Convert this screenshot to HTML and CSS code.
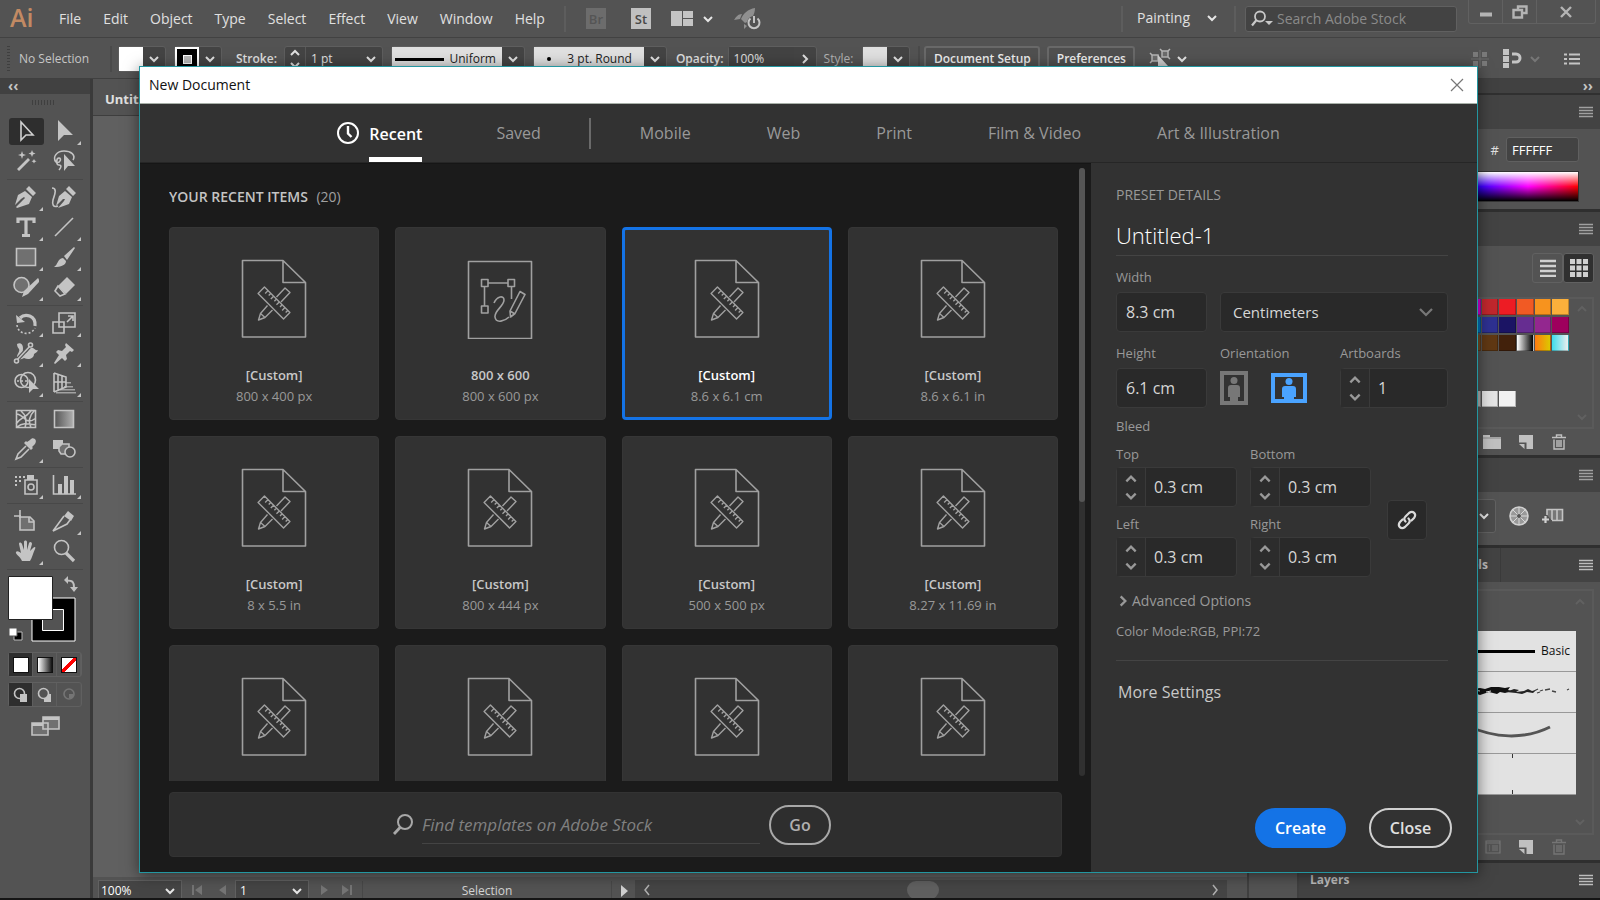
FILE: index.html
```html
<!DOCTYPE html>
<html lang="en">
<head>
<meta charset="utf-8">
<title>New Document</title>
<link rel="stylesheet" href="styles.css">
</head>
<body>
<svg class="defs" aria-hidden="true">
  <symbol id="chev-down" viewBox="0 0 12 12"><path d="M2 4l4 4 4-4" fill="none" stroke="currentColor" stroke-width="2"/></symbol>
  <symbol id="chev-up" viewBox="0 0 12 12"><path d="M2 8l4-4 4 4" fill="none" stroke="currentColor" stroke-width="2"/></symbol>
  <symbol id="chev-right" viewBox="0 0 12 12"><path d="M4 2l4 4-4 4" fill="none" stroke="currentColor" stroke-width="2"/></symbol>
  <symbol id="chev-left" viewBox="0 0 12 12"><path d="M8 1L4 6l4 5" fill="none" stroke="currentColor" stroke-width="1.5"/></symbol>
  <symbol id="chev-thin" viewBox="0 0 12 12"><path d="M4 1l4 5-4 5" fill="none" stroke="currentColor" stroke-width="1.5"/></symbol>
  <symbol id="burger" viewBox="0 0 14 12"><path d="M0 1.5h14M0 4.5h14M0 7.5h14M0 10.5h14" stroke="currentColor" stroke-width="1.6"/></symbol>
  <symbol id="custom-doc" viewBox="0 0 66 80">
    <g fill="none" stroke="currentColor" stroke-width="1.6" stroke-linejoin="round">
      <path d="M1.500 1.500h40.500l22.500 22v54.500h-63zM42 1.500v22h22.500"/>
      <g transform="rotate(45 33 44)">
        <path d="M15 39.500h36v9H15zM20 39.500v4M24 39.500v3M28 39.500v4M32 39.500v3M36 39.500v4M40 39.500v3M44 39.500v4M48 39.500v3" stroke-width="1.400"/>
      </g>
      <path d="M35.500 38l8.500-9 5 4.500-9 9.500M26.500 46.500l-7 8-2 6.500 6.500-2.500 7.500-7.500M19.500 54.500l4.500 4" stroke-width="1.400"/>
    </g>
  </symbol>
  <symbol id="art-doc" viewBox="0 0 66 80">
    <g fill="none" stroke="currentColor" stroke-width="1.600" stroke-linejoin="round">
      <path d="M1.500 2.500h63v77h-63z"/>
      <path d="M14.500 20.500h6.500v7h-6.500zM41 20.500h6.500v7H41zM14.500 47h6.500v7h-6.500zM21 24h20M17.500 27.500V47M44.500 27.500V40"/>
      <path d="M27 44c3-7 10-8 10-3 0 6-10 11-9 17 1 7 10 4 14 0M53 32.500l5 3-10 19-4.500 3.500-.500-6zM43 52l5 3"/>
    </g>
  </symbol>
  <symbol id="new-item" viewBox="0 0 16 16"><path d="M1 1h14v14H8.500V8.500H1zM1 10h5.500v5z" fill="currentColor"/></symbol>
  <symbol id="trash" viewBox="0 0 16 16"><path d="M1 3.500h14M5.500 3V1h5v2M3 5.500v9.500h10V5.500M6 6v7M8 6v7M10 6v7" fill="none" stroke="currentColor" stroke-width="1.400"/></symbol>
</svg>

<div class="app">
  <header class="menubar">
    <span class="logo">Ai</span>
    <nav class="menus">
      <button>File</button><button>Edit</button><button>Object</button><button>Type</button><button>Select</button><button>Effect</button><button>View</button><button>Window</button><button>Help</button>
    </nav>
    <span class="rule"></span>
    <button class="app-chip dim">Br</button>
    <button class="app-chip">St</button>
    <button class="arrange" aria-label="Arrange documents">
      <svg width="22" height="15" viewBox="0 0 22 15"><path d="M0 0h11v15H0zM12 0h10v7H12zM12 8h10v7H12z" fill="#c4c4c4"/></svg>
      <svg class="chev" width="12" height="12"><use href="#chev-down"/></svg>
    </button>
    <button class="gpu" aria-label="GPU preview">
      <svg width="28" height="24" viewBox="0 0 28 24"><path d="M21 1c-7 1-12 6-14 11l4 4c6-2 10-8 10-15zM8 7c-4 0-6 3-8 6l6-1zM10 17l0 5 3-3z" fill="#8f8f8f"/><circle cx="20" cy="16" r="7" fill="#535353"/><path d="M16.500 11.500a5.500 5.500 0 1 0 7 0M20 9v7" fill="none" stroke="#c4c4c4" stroke-width="2"/></svg>
    </button>
    <span class="grow"></span>
    <span class="rule"></span>
    <button class="workspace">Painting <svg class="chev" width="12" height="12"><use href="#chev-down"/></svg></button>
    <span class="rule"></span>
    <label class="stock">
      <svg width="22" height="18" viewBox="0 0 22 18"><circle cx="9" cy="6.500" r="5" fill="none" stroke="#c8c8c8" stroke-width="1.800"/><path d="M5.500 10L1 15.500" stroke="#c8c8c8" stroke-width="2.200"/><path d="M14 11h8l-4 4z" fill="#c8c8c8"/></svg>
      <input type="text" placeholder="Search Adobe Stock" aria-label="Search Adobe Stock">
    </label>
    <div class="winbtns">
      <button aria-label="Minimize"><svg width="14" height="14"><path d="M1 9.500h12" stroke="#b4b4b4" stroke-width="4"/></svg></button>
      <button aria-label="Restore"><svg width="16" height="14" viewBox="0 0 16 14"><path d="M6 5V1.500h8.500V8H10M1.500 5H10v7.500H1.500z" fill="none" stroke="#b4b4b4" stroke-width="2.400"/></svg></button>
      <button class="wide" aria-label="Exit"><svg width="14" height="14"><path d="M2 2l10 10M12 2L2 12" stroke="#b4b4b4" stroke-width="2.400"/></svg></button>
    </div>
  </header>

  <div class="control">
    <span class="grip-v"></span>
    <span class="nosel">No Selection</span>
    <span class="rule"></span>
    <div class="combo fill"><span class="sw white"></span><button aria-label="Fill"><svg width="12" height="12"><use href="#chev-down"/></svg></button></div>
    <div class="combo strokec"><span class="sw ring"></span><button aria-label="Stroke color"><svg width="12" height="12"><use href="#chev-down"/></svg></button></div>
    <label class="lbl" for="stroke">Stroke:</label>
    <div class="combo pt">
      <span class="mini-step"><button aria-label="More"><svg width="12" height="12"><use href="#chev-up"/></svg></button><button aria-label="Less"><svg width="12" height="12"><use href="#chev-down"/></svg></button></span>
      <input id="stroke" type="text" value="1 pt"><button aria-label="Stroke weights"><svg width="12" height="12"><use href="#chev-down"/></svg></button>
    </div>
    <div class="combo"><span class="sample uniform"><i></i>Uniform</span><button aria-label="Profile"><svg width="12" height="12"><use href="#chev-down"/></svg></button></div>
    <div class="combo"><span class="sample round"><b></b>3 pt. Round</span><button aria-label="Brush"><svg width="12" height="12"><use href="#chev-down"/></svg></button></div>
    <label class="lbl dotted" for="opacity">Opacity:</label>
    <div class="combo op"><input id="opacity" type="text" value="100%"><button aria-label="Opacity slider"><svg width="12" height="12"><use href="#chev-right"/></svg></button></div>
    <span class="lbl soft">Style:</span>
    <div class="combo"><span class="sw light"></span><button aria-label="Style"><svg width="12" height="12"><use href="#chev-down"/></svg></button></div>
    <span class="rule"></span>
    <button class="cbtn setup">Document Setup</button>
    <button class="cbtn prefs">Preferences</button>
    <button class="icon similar" aria-label="Select similar"><svg width="24" height="22" viewBox="0 0 24 22"><path d="M4 7h6v6H4zM14 3h6v6h-6z" fill="#6c6c6c" stroke="#b4b4b4" stroke-width="1.500"/><path d="M2 5l2 2M2 15l2-2M12 1l2 2M22 1l-2 2M22 11l-2-2" stroke="#b4b4b4" stroke-width="1.500"/><path d="M10 7l10 11h-6l-4 4z" fill="#d0d0d0"/></svg></button>
    <svg class="chev" width="12" height="12"><use href="#chev-down"/></svg>
    <span class="grow"></span>
    <button class="icon" aria-label="Align pixels"><svg width="18" height="18"><path d="M2 2h5v5H2zM11 2h5v5h-5zM2 11h5v5H2zM11 11h5v5h-5z" fill="#7a7a7a"/><path d="M0 9h18M9 0v18" stroke="#6c6c6c"/></svg></button>
    <button class="icon snap" aria-label="Snap"><svg width="19" height="20"><path d="M0 0h6v6H0zM0 7h6v6H0zM0 14h6v5H0z" fill="#c4c4c4"/><path d="M9 5h4a4 4 0 0 1 0 8H9" fill="none" stroke="#c4c4c4" stroke-width="3"/></svg></button>
    <svg class="chev dimc" width="12" height="12"><use href="#chev-down"/></svg>
    <button class="icon opts" aria-label="Options"><svg width="16" height="12"><path d="M0 1.500h3M0 6h3M0 10.500h3M5 1.500h11M5 6h11M5 10.500h11" stroke="#c4c4c4" stroke-width="2"/></svg></button>
  </div>

  <div class="work">
    <aside class="toolbox">
      <div class="tb-head">‹‹</div>
      <div class="grip-h"></div>
      <div class="tools">
        <button class="on" aria-label="Selection"><svg width="26" height="26" viewBox="0 0 26 26"><path d="M8 4v18l5-5h7z" fill="none" stroke="#d0d0d0" stroke-width="1.600"/></svg></button>
        <button class="more" aria-label="Direct selection"><svg width="26" height="26" viewBox="0 0 26 26"><path d="M7 2v21l6-6h9z"/></svg></button>
        <button aria-label="Magic wand"><svg width="26" height="26" viewBox="0 0 26 26"><path d="M4 21L15 10l2 2L6 23zM9 3l1 3 3 1-3 1-1 3-1-3-3-1 3-1zM19 2l1 2.500 2.500 1-2.500 1-1 2.500-1-2.500-2.500-1 2.500-1zM21 11l.8 1.500 1.700.8-1.700.8-.8 1.500-.8-1.500-1.700-.8 1.700-.8z"/></svg></button>
        <button aria-label="Lasso"><svg width="26" height="26" viewBox="0 0 26 26"><g class="ln"><path d="M5 14C1 9 6 3 13 3s12 4 9 9M5 14c4 2 6-4 3-4s-3 7 0 7 2 3 0 5"/></g><path d="M13 6v17l4-5h7z"/></svg></button>
      </div>
      <div class="tools">
        <button class="more" aria-label="Pen"><svg width="26" height="26" viewBox="0 0 26 26"><path d="M16 2l7 7-3 3-7-7zM12 7l7 6-3 7-12 4-1-1 7-7 2-2-1-1-3 2-6 6 3-10z"/></svg></button>
        <button aria-label="Curvature"><svg width="26" height="26" viewBox="0 0 26 26"><path d="M18 2l7 7-3 3-7-7zM14 7l7 6-3 7-11 4 6-7 1-2-2 0-7 7 3-10z"/><path class="ln" d="M1 4c6 0 2 8 1 12s0 8 5 6"/></svg></button>
        <button class="more" aria-label="Type"><svg width="26" height="26" viewBox="0 0 26 26"><path class="th" d="M5 9V5h16v4M13 5v17M9 21.500h8"/></svg></button>
        <button class="more" aria-label="Line"><svg width="26" height="26" viewBox="0 0 26 26"><path class="ln" d="M4 22L22 4"/></svg></button>
        <button class="more" aria-label="Rectangle"><svg width="26" height="26" viewBox="0 0 26 26"><path class="ln fd" d="M3.500 4.500h19v17h-19z"/></svg></button>
        <button class="more" aria-label="Brush"><svg width="26" height="26" viewBox="0 0 26 26"><path d="M23 3L13 12l3 4 8-12zM12 14l3 3c0 4-5 6-12 6 4-2 3-8 9-9z"/></svg></button>
        <button class="more" aria-label="Shaper"><svg width="26" height="26" viewBox="0 0 26 26"><circle class="ln fd" cx="8.500" cy="11" r="7.500"/><path d="M25 4l2 3L15 20l-6 3 2-6z"/></svg></button>
        <button class="more" aria-label="Eraser"><svg width="26" height="26" viewBox="0 0 26 26"><path d="M16 3l8 8-9 9-8-8z"/><path class="ln" d="M7 12l-3 5 5 5 5-2z"/></svg></button>
      </div>
      <div class="tools">
        <button class="more" aria-label="Rotate"><svg width="26" height="26" viewBox="0 0 26 26"><path class="th" d="M7 8c5-5 16-3 15 8"/><path d="M3 5l1 8 8-1z"/><path class="ln dot" d="M4 15c1 10 14 11 18 3"/></svg></button>
        <button class="more" aria-label="Scale"><svg width="26" height="26" viewBox="0 0 26 26"><path class="ln" d="M8 3h16v14H8zM2 12h11v11H2zM16 12l6-6M17 6h5v5"/></svg></button>
        <button class="more" aria-label="Width"><svg width="26" height="26" viewBox="0 0 26 26"><path d="M4 4c3-2 6 0 6 4 0 3-1 5 2 5s4-7 8-5c2 1 3 3 5 2-1 3-3 3-4 4 0 5-6 6-10 4-3 2-8 2-7-2 1-3 3-5 2-7-1-1-2-3-2-5z"/><path d="M3 21L18 5" stroke="#535353" stroke-width="4"/><path class="ln" d="M3 21L18 5"/><circle class="ln bg" cx="3.500" cy="21" r="2"/><circle class="ln bg" cx="17.500" cy="5" r="2"/></svg></button>
        <button class="more" aria-label="Puppet warp"><svg width="26" height="26" viewBox="0 0 26 26"><path d="M15 3l8 7-2 2-2-1-4 4 1 4-2 2-9-9 2-2 4 1 4-4-1-2zM8 15l3 3-7 6-1-1z"/></svg></button>
        <button class="more" aria-label="Shape builder"><svg width="26" height="26" viewBox="0 0 26 26"><circle class="ln" cx="8.500" cy="11" r="6.500"/><circle class="ln" cx="15" cy="10" r="7.500"/><path class="ln dot" d="M4 11h12"/><path d="M16 9v14l4-4h6z"/></svg></button>
        <button class="more" aria-label="Perspective grid"><svg width="26" height="26" viewBox="0 0 26 26"><path class="ln" d="M3 3v19M3 3l12 4v10L3 22M7 4v16M11 5v13M3 12h12"/><path d="M14 12h6v1.500h-6zM13 16h9v1.500h-9zM9 19h15v1.500H9zM5 22h20v1.500H5z" opacity=".7"/></svg></button>
      </div>
      <div class="tools">
        <button aria-label="Mesh"><svg width="26" height="26" viewBox="0 0 26 26"><path class="ln" d="M3.500 4.500h19v17h-19zM3 8c4 0 6 2 9 5s6 3 11-1M3 18c3-5 7-6 11-9l5-5M4 21c6-5 12-3 19-2M8 5c5 4 6 10 4 17M21 5c-5 5-6 10-3 17"/></svg></button>
        <button aria-label="Gradient"><svg width="26" height="26" viewBox="0 0 26 26"><defs><linearGradient id="g1"><stop stop-color="#555"/><stop offset="1" stop-color="#b0b0b0"/></linearGradient></defs><path d="M3.500 4.500h19v17h-19z" fill="url(#g1)" stroke="#c4c4c4" stroke-width="1.600"/></svg></button>
        <button class="more" aria-label="Eyedropper"><svg width="26" height="26" viewBox="0 0 26 26"><path d="M17 4c3-4 8 0 5 4l-3 3 1 1-2 2-7-7 2-2 1 1z"/><path class="ln" d="M13 10L5 18l-2 5 5-2 8-8"/></svg></button>
        <button aria-label="Blend"><svg width="26" height="26" viewBox="0 0 26 26"><path d="M2 4h10v9H2z"/><path class="ln fd" d="M11 8h7v7l-3 3h-5l-2-3v-4z"/><circle class="ln bg" cx="19" cy="16" r="5"/></svg></button>
      </div>
      <div class="tools">
        <button class="more" aria-label="Symbol sprayer"><svg width="26" height="26" viewBox="0 0 26 26"><path class="ln" d="M12 8h12v14H12z"/><circle class="ln" cx="18" cy="15" r="3"/><path d="M14 3h7v5h-7zM2 4h2v2H2zM6 4h2v2H6zM10 4h2v2h-2zM2 8h2v2H2zM6 8h2v2H6zM2 12h2v2H2z"/></svg></button>
        <button class="more" aria-label="Graph"><svg width="26" height="26" viewBox="0 0 26 26"><path class="ln" d="M2.500 3v19H25"/><path d="M7 12h4v10H7zM13 4h4v18h-4zM19 8h4v14h-4z"/></svg></button>
      </div>
      <div class="tools">
        <button aria-label="Artboard"><svg width="26" height="26" viewBox="0 0 26 26"><path class="ln fd" d="M7 9h10l4 4v9H7z"/><path class="ln" d="M7 2v8M1 8h7M16 9v5h5"/></svg></button>
        <button class="more" aria-label="Slice"><svg width="26" height="26" viewBox="0 0 26 26"><path d="M17 3l6 5-3 5-7-5z"/><path class="ln" d="M13 8L2 23l14-7 3-4"/></svg></button>
        <button class="more" aria-label="Hand"><svg width="26" height="26" viewBox="0 0 26 26"><path d="M9 23c-2-5-7-7-6-9s4 0 5 1L6 6c0-2 2-2 3 0l2 6V4c0-2 3-2 3 0v8l2-7c1-2 3-1 3 1l-2 7 3-3c2-2 3-1 2 1-2 4-3 9-5 12z"/></svg></button>
        <button aria-label="Zoom"><svg width="26" height="26" viewBox="0 0 26 26"><circle class="ln" cx="10.500" cy="9.500" r="7"/><path class="th" d="M15 15l8 8"/></svg></button>
      </div>
      <svg class="fillstroke" width="84" height="72" viewBox="0 0 84 72">
        <path d="M24 22h43v43H24z" fill="#000" stroke="#fff"/><path d="M34.500 33.500h21v21h-21z" fill="#535353" stroke="#fff"/>
        <path d="M.500 .500h44v43H.500z" fill="#fff" stroke="#222"/>
        <path d="M59 4.500c6 0 7 2 7 7" fill="none" stroke="#c0c0c0" stroke-width="2"/><path d="M60 0v8l-4-4zM62 11h8l-4 5z" fill="#c0c0c0"/>
        <path d="M6 56h8v8H6z" fill="#000" stroke="#bbb"/><path d="M1 52h8v8H1z" fill="#fff" stroke="#555"/>
      </svg>
      <div class="modes">
        <button class="sel" aria-label="Color"><span class="m white"></span></button>
        <button aria-label="Gradient fill"><span class="m grad"></span></button>
        <button aria-label="None"><span class="m none"></span></button>
      </div>
      <div class="modes">
        <button class="sel" aria-label="Draw normal"><svg width="16" height="16"><circle cx="6.500" cy="6.500" r="5" class="ln"/><path d="M7 7h7v8H7z" fill="#c4c4c4"/></svg></button>
        <button aria-label="Draw behind"><svg width="16" height="16"><path d="M7 7h7v8H7z" fill="#c4c4c4"/><circle cx="6.500" cy="6.500" r="5" class="ln bg"/></svg></button>
        <button class="faint" aria-label="Draw inside"><svg width="16" height="16"><circle cx="8" cy="7" r="5" class="ln"/><path d="M8 7h4v4H8z" fill="#c4c4c4"/></svg></button>
      </div>
      <button class="screen" aria-label="Screen mode"><svg width="30" height="22"><path class="ln fd" d="M1 8h16v12H1zM12 2h16v12H12z"/><path d="M1 9.500h11M12 3.500h16" stroke="#c4c4c4" stroke-width="3"/></svg></button>
    </aside>

    <main class="canvas">
      <div class="doctabs"><span>Untitled</span></div>
      <div class="board"></div>
      <div class="status">
        <div class="zoomsel"><input type="text" value="100%" aria-label="Zoom level"><svg class="chev" width="12" height="12"><use href="#chev-down"/></svg></div>
        <div class="nav"><svg width="36" height="12"><path d="M1 1h2v10H1zM11 1v10L4 6zM35 1v10l-7-5z"/></svg></div>
        <div class="zoomsel page"><input type="text" value="1" aria-label="Artboard number"><svg class="chev" width="12" height="12"><use href="#chev-down"/></svg></div>
        <div class="nav"><svg width="36" height="12"><path d="M3 1v10l7-5zM24 1v10l7-5zM32 1h2v10h-2z"/></svg></div>
        <div class="toolname">Selection</div>
        <svg class="play" width="8" height="12"><path d="M0 0v12l7-6z" fill="#d0d0d0"/></svg>
        <div class="hscroll"><svg width="12" height="12"><use href="#chev-left"/></svg><span class="thumb"></span><svg width="12" height="12"><use href="#chev-thin"/></svg></div>
      </div>
    </main>
    <div class="strip"></div>

    <aside class="dock">
      <div class="dock-head">››</div>
      <section class="panel">
        <div class="ptab"><svg width="14" height="12"><use href="#burger"/></svg></div>
        <div class="pbody color">
          <label class="hex"># <input type="text" value="FFFFFF"></label>
          <div class="spectrum"></div>
        </div>
      </section>
      <section class="panel">
        <div class="ptab"><svg width="14" height="12"><use href="#burger"/></svg></div>
        <div class="pbody swatches">
          <div class="views">
            <button aria-label="List view"><svg width="16" height="18"><path d="M0 2h16M0 7h16M0 12h16M0 17h16" stroke="#d0d0d0" stroke-width="2.400"/></svg></button>
            <button class="sel" aria-label="Grid view"><svg width="18" height="18"><path d="M0 0h5v5H0zM6.500 0h5v5h-5zM13 0h5v5h-5zM0 6.500h5v5H0zM6.500 6.500h5v5h-5zM13 6.500h5v5h-5zM0 13h5v5H0zM6.500 13h5v5h-5zM13 13h5v5h-5z" fill="#d0d0d0"/></svg></button>
          </div>
          <div class="well">
            <div class="chips">
              <i class="c1"></i><i class="c2"></i><i class="c3"></i><i class="c4"></i><i class="c5"></i><i class="c6"></i>
              <i class="c7"></i><i class="c8"></i><i class="c9"></i><i class="c10"></i><i class="c11"></i><i class="c12"></i>
              <i class="c13"></i><i class="c14"></i><i class="c15"></i><i class="c16"></i><i class="c17"></i><i class="c18"></i>
            </div>
            <div class="chips grays"><i class="k1"></i><i class="k2"></i><i class="k3"></i></div>
            <div class="vbar"><svg width="12" height="12"><use href="#chev-up"/></svg><svg width="12" height="12"><use href="#chev-down"/></svg></div>
          </div>
          <div class="acts">
            <svg width="18" height="14"><path d="M0 0h7v2h11v12H0z" fill="currentColor"/><path d="M0 3h18" stroke="#888"/></svg>
            <svg width="16" height="16"><use href="#new-item"/></svg>
            <svg width="16" height="16"><use href="#trash"/></svg>
          </div>
        </div>
      </section>
      <section class="panel">
        <div class="ptab"><svg width="14" height="12"><use href="#burger"/></svg></div>
        <div class="pbody guide">
          <div class="gbox"><svg class="chev" width="12" height="12"><use href="#chev-down"/></svg></div>
          <svg width="22" height="22" viewBox="0 0 22 22"><circle cx="11" cy="11" r="9" fill="#999" stroke="#d0d0d0" stroke-width="1.600"/><path d="M11 2v18M2 11h18M4.500 4.500l13 13M17.500 4.500l-13 13" stroke="#d8d8d8"/><circle cx="11" cy="11" r="2" fill="#555"/></svg>
          <svg class="add" width="22" height="16" viewBox="0 0 22 16"><path d="M5 7V1.500h15.500v11H10M10 2v10M15 2v10" fill="#777" stroke="#c4c4c4" stroke-width="1.600"/><path d="M3.500 8v7M0 11.500h7" stroke="#d0d0d0" stroke-width="2.200"/></svg>
        </div>
      </section>
      <section class="panel">
        <div class="ptab named"><span class="symtab">Symbols</span><svg width="14" height="12"><use href="#burger"/></svg></div>
        <div class="pbody brushes">
          <div class="well tall">
            <div class="brushlist">
              <div class="brow"><i></i><span>Basic</span></div>
              <div class="brow"><svg width="160" height="20" viewBox="0 0 160 20"><path d="M30 9l10-2 10 1 14-2 5 1 6-2 8 0 6 1 5-1-2 3 4 1-7 2-5-1-3 2-8-2-9 3-6-2-5 3-5-1-8 2-9-3-10 3z" fill="#111"/><path d="M58 8l6 1M70 10l5-1M50 10l4-1" stroke="#e2e2e2"/><path d="M90 10l8-3 5 1-3 2 8-1 4-2 4 2 4-1-3 3-6-1-5 2-6-1z" fill="#222"/><path d="M118 9l4-2M124 9l3-1M129 8l5-1M121 11l3-1M136 9l4 1M151 8l2-1" stroke="#444" stroke-width="1.300"/></svg></div>
              <div class="brow"><svg width="160" height="20" viewBox="0 0 160 20"><path d="M52 3C78 15 108 17 134 4" fill="none" stroke="#555" stroke-width="3"/></svg></div>
              <div class="brow ticks"><b></b><b></b></div>
            </div>
            <div class="vbar"><svg width="12" height="12"><use href="#chev-up"/></svg><svg width="12" height="12"><use href="#chev-down"/></svg></div>
          </div>
          <div class="acts">
            <svg class="off" width="16" height="16"><path d="M1 2h14v12H1zM1 4h14M4 7h1M7 7h6M4 9h1M7 9h6M4 11h1M7 11h6" fill="none" stroke="currentColor" stroke-width="1.200"/></svg>
            <svg width="16" height="16"><use href="#new-item"/></svg>
            <svg class="off" width="16" height="16"><use href="#trash"/></svg>
          </div>
        </div>
      </section>
      <section class="panel last">
        <div class="ptab named"><span>Layers</span><svg width="14" height="12"><use href="#burger"/></svg></div>
      </section>
    </aside>
  </div>
</div>

<div class="dialog" role="dialog" aria-labelledby="dlg-title">
  <div class="titlebar"><h1 id="dlg-title">New Document</h1><button aria-label="Close dialog"><svg width="14" height="14"><path d="M1 1l12 12M13 1L1 13" stroke="#777" stroke-width="1.200"/></svg></button></div>
  <nav class="tabs">
    <button class="active"><svg width="24" height="24"><circle cx="12" cy="12" r="10" fill="none" stroke="#fff" stroke-width="2"/><path d="M12 5v7.500l3.500 3.500" fill="none" stroke="#fff" stroke-width="2.400"/></svg><span>Recent</span></button>
    <button>Saved</button>
    <i class="split"></i>
    <button>Mobile</button><button>Web</button><button>Print</button><button>Film &amp; Video</button><button>Art &amp; Illustration</button>
  </nav>
  <div class="dlg-main">
    <section class="recent">
      <div class="listwrap">
        <div class="list">
          <h2>YOUR RECENT ITEMS <span>(20)</span></h2>
          <div class="cards">
            <button class="card"><svg><use href="#custom-doc"/></svg><strong>[Custom]</strong><span>800 x 400 px</span></button>
            <button class="card"><svg><use href="#art-doc"/></svg><strong>800 x 600</strong><span>800 x 600 px</span></button>
            <button class="card picked"><svg><use href="#custom-doc"/></svg><strong>[Custom]</strong><span>8.6 x 6.1 cm</span></button>
            <button class="card"><svg><use href="#custom-doc"/></svg><strong>[Custom]</strong><span>8.6 x 6.1 in</span></button>
            <button class="card"><svg><use href="#custom-doc"/></svg><strong>[Custom]</strong><span>8 x 5.5 in</span></button>
            <button class="card"><svg><use href="#custom-doc"/></svg><strong>[Custom]</strong><span>800 x 444 px</span></button>
            <button class="card"><svg><use href="#custom-doc"/></svg><strong>[Custom]</strong><span>500 x 500 px</span></button>
            <button class="card"><svg><use href="#custom-doc"/></svg><strong>[Custom]</strong><span>8.27 x 11.69 in</span></button>
            <button class="card"><svg><use href="#custom-doc"/></svg></button>
            <button class="card"><svg><use href="#custom-doc"/></svg></button>
            <button class="card"><svg><use href="#custom-doc"/></svg></button>
            <button class="card"><svg><use href="#custom-doc"/></svg></button>
          </div>
        </div>
        <div class="sbar"><span></span></div>
      </div>
      <form class="find">
        <svg width="22" height="24" viewBox="0 0 22 24"><circle cx="13" cy="9" r="7" fill="none" stroke="#a8a8a8" stroke-width="2"/><path d="M8.500 14L2 21" stroke="#a8a8a8" stroke-width="2.800"/></svg>
        <input type="text" placeholder="Find templates on Adobe Stock" aria-label="Find templates">
        <button type="button" class="pill go">Go</button>
      </form>
    </section>

    <section class="details">
      <h2>PRESET DETAILS</h2>
      <input class="docname" type="text" value="Untitled-1" aria-label="Name">
      <div class="row">
        <label class="field w">Width<input type="text" value="8.3 cm"></label>
        <div class="unit"><select aria-label="Units"><option>Centimeters</option></select><svg width="18" height="18" viewBox="0 0 12 12"><path d="M2 4l4 4 4-4" fill="none" stroke="#777" stroke-width="1.500"/></svg></div>
      </div>
      <div class="row">
        <label class="field w">Height<input type="text" value="6.1 cm"></label>
        <div class="orient"><span>Orientation</span>
          <div>
            <button aria-label="Portrait"><svg width="28" height="34"><path d="M2 2h24v30H2z" fill="none" stroke="#777" stroke-width="4"/><circle cx="14" cy="9.500" r="3.500" fill="#777"/><path d="M8 26V17q0-3 3-3h6q3 0 3 3v9h-2v6h-8v-6z" fill="#777"/></svg></button>
            <button aria-label="Landscape"><svg width="36" height="30"><path d="M2 2h32v26H2z" fill="none" stroke="#4aa3ff" stroke-width="4"/><circle cx="18" cy="8.500" r="3.500" fill="#4aa3ff"/><path d="M11 24V16q0-3 3-3h8q3 0 3 3v8h-2v4h-10v-4z" fill="#4aa3ff"/></svg></button>
          </div>
        </div>
        <label class="field a">Artboards<span class="stepper"><span class="ud"><svg width="14" height="14"><use href="#chev-up"/></svg><svg width="14" height="14"><use href="#chev-down"/></svg></span><input type="text" value="1"></span></label>
      </div>
      <h3>Bleed</h3>
      <div class="bleed">
        <div class="quad">
          <label class="field">Top<span class="stepper"><span class="ud"><svg width="14" height="14"><use href="#chev-up"/></svg><svg width="14" height="14"><use href="#chev-down"/></svg></span><input type="text" value="0.3 cm"></span></label>
          <label class="field">Bottom<span class="stepper"><span class="ud"><svg width="14" height="14"><use href="#chev-up"/></svg><svg width="14" height="14"><use href="#chev-down"/></svg></span><input type="text" value="0.3 cm"></span></label>
          <label class="field">Left<span class="stepper"><span class="ud"><svg width="14" height="14"><use href="#chev-up"/></svg><svg width="14" height="14"><use href="#chev-down"/></svg></span><input type="text" value="0.3 cm"></span></label>
          <label class="field">Right<span class="stepper"><span class="ud"><svg width="14" height="14"><use href="#chev-up"/></svg><svg width="14" height="14"><use href="#chev-down"/></svg></span><input type="text" value="0.3 cm"></span></label>
        </div>
        <button class="link" aria-label="Link bleed values"><svg width="20" height="20" viewBox="0 0 20 20"><g fill="none" stroke="#dadada" stroke-width="2.200" stroke-linecap="round"><path d="M8.500 11.500c-2-2-1-4 0-5l3.500-3.500c4-3 8 1 5 5l-2.500 2.500"/><path d="M11.500 8.500c2 2 1 4 0 5L8 17c-4 3-8-1-5-5l2.500-2.500"/></g></svg></button>
      </div>
      <button class="adv"><svg width="14" height="14"><use href="#chev-right"/></svg>Advanced Options</button>
      <p class="mode">Color Mode:RGB, PPI:72</p>
      <button class="moreset">More Settings</button>
      <div class="foot"><button class="pill create">Create</button><button class="pill close">Close</button></div>
    </section>
  </div>
</div>
</body>
</html>
```

FILE: styles.css
```css
* { box-sizing: border-box; }
html, body { height: 100%; }
body {
  margin: 0;
  overflow: hidden;
  background: #111;
  color: #e0e0e0;
  font: 12px/16px "Open Sans", "Noto Sans", sans-serif;
}
button, input, select {
  font: inherit;
  color: inherit;
  background: none;
  border: 0;
  padding: 0;
  margin: 0;
  min-width: 0;
}
svg { display: block; flex: none; }
h1, h2, h3, p { margin: 0; font-weight: 400; }
.defs { position: absolute; width: 0; height: 0; }
.grow { flex: 1; }
.chev { color: #e6e6e6; }
.dimc { color: #777; }
.rule { width: 2px; height: 26px; background: #494949; flex: none; }

.app { height: 100vh; display: flex; flex-direction: column; background: #535353; border-bottom: 2px solid #151515; }

/* Menu bar */
.menubar { height: 38px; flex: none; display: flex; align-items: center; border-bottom: 1px solid #424242; font-size: 14px; line-height: 20px; }
.logo { width: 48px; padding: 0 0 4px 10px; font-size: 25px; line-height: 28px; font-weight: 600; color: #c28a63; }
.menus { display: flex; gap: 22px; padding: 0 19px 0 11px; }
.menubar .rule { background: #5d5d5d; }
.app-chip { width: 20px; height: 21px; background: #c0c0c0; color: #484848; font-size: 13px; font-weight: 600; line-height: 20px; margin-left: 25px; }
.app-chip.dim { background: #6c6c6c; color: #555; margin-left: 20px; }
.arrange { display: flex; gap: 9px; align-items: center; margin: 0 20px; }
.workspace { display: flex; gap: 16px; align-items: center; padding: 0 16px 2px 14px; }
.stock { display: flex; align-items: center; gap: 4px; width: 212px; height: 26px; margin: 0 11px 0 9px; padding-left: 5px; background: #434343; border: 1px solid #606060; border-radius: 3px; }
.stock input { flex: 1; }
.stock input::placeholder { color: #8a8a8a; opacity: 1; }
.winbtns { display: flex; align-self: flex-start; height: 24px; margin-right: 4px; border: 1px solid #616161; border-top: 0; border-radius: 0 0 3px 3px; }
.winbtns button { width: 34px; display: grid; place-items: center; border-right: 1px solid #616161; }
.winbtns .wide { width: 58px; border: 0; }

/* Control bar */
.control { height: 41px; flex: none; display: flex; align-items: center; padding-top: 2px; border-bottom: 1px solid #404040; }
.grip-v { width: 3px; height: 26px; margin: 0 9px 0 7px; background: repeating-linear-gradient(#3f3f3f 0 1px, transparent 1px 3px); }
.nosel { width: 91px; color: #c6c6c6; }
.control .rule { background: #4a4a4a; }
.combo { display: flex; height: 26px; margin-right: 8px; border: 1px solid #5e5e5e; border-radius: 3px; background: #444; }
.combo button { width: 22px; display: grid; place-items: center; }
.combo input { background: #434343; padding-left: 5px; }
.sw { width: 24px; }
.fill { margin-left: 6px; }
.white { background: #fff; }
.light { background: #e0e0e0; }
.ring { background: #000; border: 2px solid #fff; display: grid; place-items: center; }
.ring::after { content: ""; width: 7px; height: 7px; background: #bbb; border: 1px solid #fff; }
.lbl { margin: 0 7px 0 1px; font-weight: 600; }
.strokec { margin-right: 13px; }
.dotted { border-bottom: 1px dotted #bbb; margin: 0 4px 0 1px; }
.soft { color: #b4b4b4; margin: 0 9px 0 -1px; font-weight: 400; }
.mini-step { width: 21px; display: flex; flex-direction: column; border-right: 1px solid #585858; }
.mini-step button { width: 20px; height: 12px; }
.pt input { width: 54px; }
.op input { width: 65px; }
.sample { display: flex; align-items: center; justify-content: flex-end; gap: 6px; width: 110px; padding-right: 6px; background: #e0e0e0; color: #222; }
.uniform i { width: 49px; height: 3px; background: #000; }
.round { padding-right: 12px; gap: 16px; }
.round b { width: 4px; height: 4px; border-radius: 2px; background: #000; }
.cbtn { height: 26px; margin-left: 7px; border: 2px solid #696969; border-radius: 3px; background: #505050; font-weight: 600; color: #eee; white-space: nowrap; }
.setup { width: 116px; margin-left: 4px; }
.prefs { width: 88px; }
.control > .icon { margin: 0 9px 0 14px; }
.control > .similar { margin: 0 4px 0 13px; }
.control > .snap { margin: 0 7px 0 5px; }
.control > .opts { margin: 0 20px 0 23px; }

/* Workspace */
.work { flex: 1; min-height: 0; display: flex; overflow: hidden; }
.toolbox { width: 93px; flex: none; border-right: 3px solid #3a3a3a; display: flex; flex-direction: column; }
.tb-head { height: 15px; flex: none; background: #414141; padding-left: 8px; font-size: 14px; line-height: 14px; font-weight: 700; color: #c4c4c4; }
.grip-h { width: 24px; height: 5px; flex: none; margin: 6px 0 11px 32px; background: repeating-linear-gradient(90deg, #3f3f3f 0 1px, transparent 1px 3px); }
.tools { display: grid; grid-template-columns: 38px 38px; grid-auto-rows: 30px; margin: 0 7px; padding: 2px 0 3px; border-bottom: 1px solid #484848; }
.grip-h + .tools { padding-top: 0; }
.tools button { position: relative; display: grid; place-items: center; fill: #c4c4c4; }
.tools .on { background: #2e2e2e; border-radius: 3px; width: 35px; height: 27px; place-self: center; }
.tools .more::after { content: ""; position: absolute; right: 2px; bottom: 1px; border: 2px solid #c4c4c4; border-top-color: transparent; border-left-color: transparent; }
.ln { fill: none; stroke: #c4c4c4; stroke-width: 1.6px; }
.th { fill: none; stroke: #c4c4c4; stroke-width: 3.2px; }
.fd { fill: #707070; }
.bg { fill: #535353; }
.dot { stroke-dasharray: 2 2; }
.fillstroke { margin: 6px 0 4px 8px; }
.modes { display: flex; width: 74px; height: 25px; flex: none; margin: 0 0 5px 8px; border: 1px solid #606060; border-radius: 3px; }
.modes button { flex: 1; display: grid; place-items: center; border-right: 1px solid #5e5e5e; }
.modes .sel { background: #2e2e2e; }
.m { width: 16px; height: 16px; border: 1px solid #111; }
.grad { background: linear-gradient(90deg, #fff, #111); }
.m.none { background: linear-gradient(-45deg, #fff 42%, #f00 42% 58%, #fff 58%); background: linear-gradient(to bottom right, #fff 42%, #f00 42% 58%, #fff 58%); }
.faint { opacity: .3; }
.screen { margin: 3px 0 0 31px; }

.canvas { flex: 1; min-width: 0; display: flex; flex-direction: column; background: #606060; }
.doctabs { height: 37px; flex: none; background: #484848; border-bottom: 1px solid #3e3e3e; }
.doctabs span { display: block; width: 190px; height: 36px; padding: 11px 12px 7px; background: #535353; font-weight: 700; font-size: 13px; line-height: 18px; }
.board { flex: 1; }
.status { height: 21px; flex: none; display: flex; align-items: center; padding: 4px 20px 0 5px; background: #535353; }
.zoomsel { width: 84px; height: 20px; display: flex; align-items: center; background: #454545; border: 1px solid #616161; padding: 2px 5px 0 2px; color: #fff; }
.zoomsel input { flex: 1; width: 20px; }
.page { width: 74px; padding-left: 4px; }
.nav { width: 53px; display: grid; place-items: center; fill: #757575; }
.toolname { width: 250px; padding-top: 2px; text-align: center; border: 1px solid #484848; border-width: 0 1px; color: #d4d4d4; }
.play { margin: 2px 6px 0 9px; }
.hscroll { flex: 1; height: 20px; display: flex; align-items: center; justify-content: space-between; padding: 0 6px; background: #454545; color: #b0b0b0; }
.thumb { width: 32px; height: 18px; border-radius: 9px; background: #606060; margin-right: 16px; }
.strip { width: 52px; flex: none; background: #535353; border: 3px solid #404040; border-width: 15px 2px 0; }

/* Panel dock */
.dock { width: 301px; flex: none; display: flex; flex-direction: column; overflow: hidden; }
.dock-head { height: 16px; flex: none; background: #414141; border-bottom: 2px solid #303030; padding-right: 7px; text-align: right; font-size: 14px; line-height: 14px; font-weight: 700; color: #c4c4c4; }
.panel { border-bottom: 3px solid #2f2f2f; }
.ptab { height: 34px; display: flex; align-items: center; justify-content: flex-end; padding-right: 7px; background: #434343; color: #a0a0a0; }
.named { justify-content: space-between; padding-left: 11px; font-weight: 700; font-size: 12px; color: #bdbdbd; }
.symtab { width: 191px; height: 34px; line-height: 34px; text-align: right; padding-right: 12px; border-right: 1px solid #3a3a3a; }
.color { height: 80px; padding: 8px 21px 0 0; }
.hex { display: flex; justify-content: flex-end; align-items: center; gap: 7px; font-size: 13px; }
.hex input { width: 73px; height: 25px; padding-left: 5px; background: #434343; border: 1px solid #606060; border-radius: 3px; color: #fff; }
.spectrum { height: 31px; margin-top: 9px; border: 1px solid #333; background: linear-gradient(#fff, transparent 50%, #000), linear-gradient(90deg, #f00, #ff0 17%, #0f0 33%, #0ff 50%, #00f 60%, #f0f 82%, #f00); }
.swatches { height: 209px; padding: 7px 6px 0 0; }
.views { display: flex; justify-content: flex-end; }
.views button { width: 31px; height: 30px; display: grid; place-items: center; border: 1px solid #616161; border-radius: 3px; }
.views .sel { background: #303030; }
.well { display: grid; grid-template-columns: 1fr 23px; align-content: start; height: 132px; margin-top: 14px; border: 2px solid #5a5a5a; }
.chips { grid-column: 1; justify-self: end; display: grid; grid-template-columns: repeat(6, 1fr); grid-auto-rows: 16px; gap: 2px 1px; width: 105px; }
.chips i { border: 1px solid rgba(0, 0, 0, .25); border-width: 0 1px 1px 0; }
.grays { margin-top: 40px; }
.vbar { grid-column: 2; grid-row: 1 / span 4; height: 128px; display: flex; flex-direction: column; justify-content: space-between; padding: 4px 7px; color: #616161; }
.c1 { background: #d400d4; } .c2 { background: #c1272d; } .c3 { background: #ed1c24; } .c4 { background: #f15a24; } .c5 { background: #f7931e; } .c6 { background: #fbb03b; }
.c7 { background: #0071bc; } .c8 { background: #2e3192; } .c9 { background: #1b1464; } .c10 { background: #662d91; } .c11 { background: #93278f; } .c12 { background: #9e005d; }
.c13 { background: #754c24; } .c14 { background: #603813; } .c15 { background: #42210b; } .c16 { background: linear-gradient(90deg, #fff, #000); } .c17 { background: linear-gradient(90deg, #ff7a10, #dcc800); } .c18 { background: linear-gradient(90deg, #3cdcec, #eee); }
.k1 { background: #b3b3b3; } .k2 { background: #e4e4e4; } .k3 { background: #f2f2f2; }
.acts { display: flex; justify-content: flex-end; align-items: center; gap: 16px; padding: 5px 26px 0 0; color: #c0c0c0; }
.acts svg { margin-right: 1px; }
.acts .off { color: #757575; }
.guide { height: 53px; display: flex; align-items: center; justify-content: flex-end; padding: 0 36px 6px 0; gap: 12px; }
.gbox { flex: 1; height: 34px; display: flex; align-items: center; justify-content: flex-end; padding-right: 5px; border: 1px solid #626262; border-radius: 3px; background: #4a4a4a; }
.brushes { height: 278px; padding: 7px 6px 0 0; }
.tall { height: 246px; margin: 0; grid-template-columns: 1fr 16px; }
.tall .vbar { height: 242px; padding: 5px 0; margin-left: -2px; }
.brushlist { margin-top: 40px; color: #111; }
.brow { height: 41px; background: #e2e2e2; border-bottom: 1px solid #999; display: flex; align-items: center; justify-content: flex-end; gap: 6px; padding-right: 6px; }
.brow > i { flex: 1; height: 3px; background: #000; }
.brow svg { margin-right: -6px; }
.ticks { flex-direction: column; align-items: flex-end; justify-content: space-between; padding-right: 63px; }
.ticks b { width: 1px; height: 4px; background: #333; }
.last { flex: 1; background: #434343; border: 0; }
.brushes .acts { padding-top: 4px; }

/* Dialog */
.dialog { position: absolute; inset: 66px 122px 27px 139px; display: flex; flex-direction: column; background: #323232; border: 1px solid #2396a0; box-shadow: 0 2px 14px rgba(0, 0, 0, .5); overflow: hidden; }
.titlebar { height: 37px; flex: none; display: flex; justify-content: space-between; align-items: center; padding: 0 13px 0 9px; background: #fff; border-bottom: 1px solid #a8b0a8; color: #111; }
.titlebar h1 { font-size: 14px; line-height: 20px; }
.tabs { height: 59px; flex: none; display: flex; justify-content: center; align-items: stretch; border-bottom: 1px solid #262626; font-size: 16px; line-height: 24px; color: #999; }
.tabs button { padding: 0 37px; white-space: nowrap; }
.tabs button:nth-of-type(n+3) { padding: 0 38px; }
.tabs .active { display: flex; align-items: center; gap: 9px; color: #fff; font-weight: 600; }
.tabs .active span { align-self: stretch; padding-top: 18px; border-bottom: 5px solid #fff; }
.split { width: 2px; height: 31px; margin: 0 11px; align-self: center; background: #6a6a6a; }
.dlg-main { flex: 1; min-height: 0; display: flex; }
.recent { flex: 1; min-width: 0; display: flex; flex-direction: column; background: #1b1b1b; border-top: 1px solid #161616; padding: 0 6px 15px 29px; }
.listwrap { flex: 1; min-height: 0; display: flex; gap: 21px; }
.list { flex: 1; overflow: hidden; }
.list h2 { padding: 23px 0 20px; font-size: 14px; line-height: 20px; font-weight: 600; color: #c4c4c4; }
.list h2 span { margin-left: 5px; font-weight: 400; color: #a0a0a0; }
.cards { display: grid; grid-template-columns: repeat(4, 1fr); gap: 16px; }
.card { height: 193px; display: flex; flex-direction: column; align-items: center; justify-content: flex-start; padding-top: 31px; border: 1px solid #363636; border-radius: 4px; background: #323232; color: #999; font-size: 13px; line-height: 21px; }
.card svg { width: 66px; height: 80px; margin-bottom: 26px; color: #a0a0a0; }
.card strong { font-weight: 600; color: #c8c8c8; }
.picked { border: 3px solid #1473e6; padding-top: 29px; }
.picked strong { color: #fff; }
.sbar { width: 6px; height: 608px; margin-top: 4px; background: #303030; border-radius: 3px; }
.sbar span { display: block; height: 55%; background: #555; border-radius: 3px; }
.find { flex: none; height: 65px; display: flex; align-items: center; justify-content: center; margin: 11px 23px 0 0; padding-right: 8px; background: #2e2e2e; border: 1px solid #333; border-radius: 4px; font-size: 17px; }
.find input { width: 338px; height: 38px; margin: 0 9px 0 8px; border-bottom: 1px solid #444; font-style: italic; }
.find input::placeholder { color: #808080; opacity: 1; }
.pill { height: 40px; border-radius: 20px; border: 2px solid #d0d0d0; font-size: 16px; font-weight: 600; }
.go { width: 62px; border-color: #a8a8a8; color: #b0b0b0; }

/* Preset details */
.details { width: 386px; flex: none; display: flex; flex-direction: column; padding: 22px 29px 24px 25px; font-size: 13px; line-height: 18px; color: #999; }
.details h2 { font-size: 14px; line-height: 20px; }
.docname { height: 42px; margin-top: 9px; padding-top: 1px; border-bottom: 1px solid #444; font-size: 22px; font-weight: 300; color: #fff; }
.row { display: flex; align-items: flex-end; margin-top: 12px; gap: 13px; }
.field { display: flex; flex-direction: column; gap: 6px; }
.w { width: 91px; }
.field > input, .unit, .stepper, .link { height: 40px; background: #292929; border: 1px solid #3a3a3a; border-radius: 4px; color: #d6d6d6; font-size: 16px; font-weight: 500; }
.field > input { width: 100%; padding-left: 9px; }
.unit { flex: 1; display: grid; grid-template-columns: 1fr 30px; align-items: center; font-size: 15px; }
.unit select { grid-area: 1 / 1 / 2 / 3; height: 36px; padding-left: 12px; appearance: none; }
.unit svg { grid-area: 1 / 2; pointer-events: none; }
.orient { flex: 1; display: flex; flex-direction: column; gap: 6px; }
.orient div { height: 40px; display: flex; align-items: center; gap: 23px; }
.a { width: 108px; }
.stepper { display: flex; }
.ud { width: 29px; display: flex; flex-direction: column; justify-content: space-around; align-items: center; padding: 2px 0; border-right: 1px solid #3a3a3a; background: #2c2c2c; color: #999; }
.stepper input { flex: 1; width: 60px; padding-left: 8px; }
.details h3 { margin-top: 9px; font-size: 13px; line-height: 18px; }
.bleed { display: flex; align-items: center; gap: 16px; margin-top: 10px; }
.quad { display: grid; grid-template-columns: 121px 121px; gap: 8px 13px; }
.quad .field { gap: 4px; }
.link { width: 40px; margin-top: 18px; display: grid; place-items: center; }
.adv { display: flex; align-items: center; gap: 2px; margin: 13px 0 0; font-size: 14px; line-height: 22px; }
.mode { margin-top: 9px; padding-bottom: 19px; border-bottom: 1px solid #444; line-height: 20px; }
.moreset { align-self: flex-start; margin: 19px 0 0 2px; font-size: 16px; line-height: 24px; font-weight: 500; color: #c8c8c8; }
.foot { display: flex; justify-content: flex-end; gap: 23px; margin: auto -4px 0 0; }
.create { width: 91px; background: #1473e6; border-color: #1473e6; color: #fff; }
.close { width: 83px; color: #e0e0e0; }
```
